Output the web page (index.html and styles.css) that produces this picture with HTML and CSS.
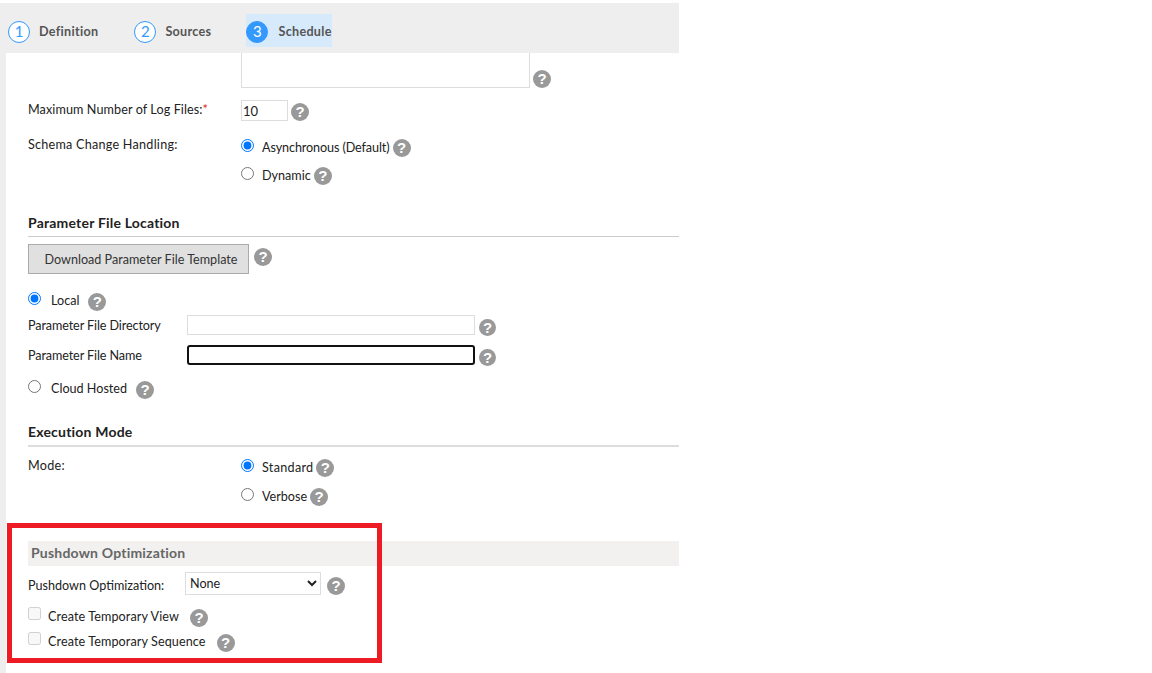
FILE: index.html
```html
<!DOCTYPE html>
<html lang="en">
<head>
    <meta charset="UTF-8">
    <title>Schedule</title>
    <link rel="stylesheet" href="styles.css">
</head>
<body>
    <div class="panel">
        <header class="steps">
            <div class="step"><span class="step-num">1</span><span class="step-name">Definition</span></div>
            <div class="step"><span class="step-num">2</span><span class="step-name">Sources</span></div>
            <div class="step active"><span class="step-num">3</span><span class="step-name">Schedule</span></div>
        </header>

        <main class="content">
            <div class="row row-notes">
                <div class="notes"></div>
                <span class="help help-notes">?</span>
            </div>

            <div class="row row-logs">
                <label class="field-label">Maximum Number of Log Files:<span class="req">*</span></label>
                <input class="text-input logs-input" type="text" value="10">
                <span class="help">?</span>
            </div>

            <div class="row row-schema">
                <label class="field-label">Schema Change Handling:</label>
                <input type="radio" name="schema" checked>
                <span class="option option-wide">Asynchronous (Default)</span>
                <span class="help help-tight">?</span>
            </div>
            <div class="row row-dynamic">
                <span class="field-label"></span>
                <input type="radio" name="schema">
                <span class="option option-wide">Dynamic</span>
                <span class="help help-tight">?</span>
            </div>

            <h2 class="section-title first-title">Parameter File Location</h2>
            <div class="row row-download">
                <button class="download-btn" type="button">Download Parameter File Template</button>
                <span class="help help-download">?</span>
            </div>

            <div class="row row-local">
                <input type="radio" name="location" checked>
                <span class="option">Local</span>
                <span class="help help-gap">?</span>
            </div>
            <div class="row row-param">
                <label class="param-label">Parameter File Directory</label>
                <input class="text-input param-input" type="text">
                <span class="help help-small">?</span>
            </div>
            <div class="row row-param row-param-name">
                <label class="param-label">Parameter File Name</label>
                <input class="text-input param-input focused" type="text">
                <span class="help help-small">?</span>
            </div>
            <div class="row row-cloud">
                <input type="radio" name="location">
                <span class="option">Cloud Hosted</span>
                <span class="help help-gap">?</span>
            </div>

            <h2 class="section-title exec-title">Execution Mode</h2>
            <div class="row row-mode">
                <label class="mode-label">Mode:</label>
                <input type="radio" name="mode" checked>
                <span class="option option-wide">Standard</span>
                <span class="help help-tight">?</span>
            </div>
            <div class="row row-verbose">
                <span class="mode-label"></span>
                <input type="radio" name="mode">
                <span class="option option-wide">Verbose</span>
                <span class="help help-tight">?</span>
            </div>

            <h2 class="pushdown-title">Pushdown Optimization</h2>
            <div class="row row-pushdown">
                <label class="pushdown-label">Pushdown Optimization:</label>
                <select class="pushdown-select">
                    <option>None</option>
                </select>
                <span class="help help-select">?</span>
            </div>
            <div class="row row-check">
                <input type="checkbox" disabled>
                <span class="check-text">Create Temporary View</span>
                <span class="help help-check">?</span>
            </div>
            <div class="row row-check row-check-last">
                <input type="checkbox" disabled>
                <span class="check-text">Create Temporary Sequence</span>
                <span class="help help-check">?</span>
            </div>
        </main>
    </div>

    <!-- annotation drawn over the screenshot -->
    <div class="callout"></div>
</body>
</html>
```

FILE: styles.css
```css
html, body {
    height: 100%;
}
body {
    margin: 0;
    background-color: #fff;
    color: #222;
    font-family: Lato, "Open Sans", sans-serif;
    font-size: 12.6px;
    overflow: hidden;
}
.panel {
    width: 679px;
    height: 670px;
    margin-top: 3px;
    background-color: #eee;
}
.steps {
    display: flex;
    align-items: center;
    height: 50px;
    padding-left: 8px;
}
.step {
    display: flex;
    align-items: center;
    height: 33px;
    margin-top: 5px;
    margin-right: 36px;
}
.step:nth-child(2) {
    margin-right: 35px;
}
.step-num {
    width: 22px;
    height: 22px;
    box-sizing: border-box;
    margin-top: 2px;
    border: 1px solid #39f;
    border-radius: 50%;
    background-color: #fff;
    color: #39f;
    font-size: 15px;
    line-height: 19px;
    text-align: center;
}
.step-name {
    margin-top: 2px;
    margin-left: 9px;
    color: #555;
    font-size: 12.6px;
    font-weight: 700;
    letter-spacing: 0.3px;
}
.step.active {
    margin-right: 0;
    background-color: #d6eafb;
}
.step.active .step-num {
    background-color: #39f;
    color: #fff;
}
.step.active .step-name {
    margin-left: 10px;
}
.content {
    height: 620px;
    margin-left: 6px;
    padding-left: 22px;
    background-color: #fff;
}
.row {
    display: flex;
    align-items: center;
}
.field-label {
    width: 213px;
    flex-shrink: 0;
}
.row-logs .field-label {
    margin-bottom: 2px;
    letter-spacing: 0.1px;
}
.row-schema .field-label {
    margin-bottom: 2px;
    letter-spacing: 0.25px;
}
.req {
    color: #e02020;
}
.notes {
    width: 289px;
    height: 35px;
    box-sizing: border-box;
    margin-left: 213px;
    border: 1px solid #ddd;
    border-top: none;
}
.text-input {
    box-sizing: border-box;
    margin: 0;
    padding: 1px;
    border: 1px solid #ddd;
    font-family: inherit;
    font-size: 13px;
    color: #222;
    outline: none;
}
input[type="radio"],
input[type="checkbox"] {
    margin: 0;
    flex-shrink: 0;
}
.help {
    display: inline-block;
    width: 18px;
    height: 18px;
    flex-shrink: 0;
    border-radius: 50%;
    background-color: #999;
    color: #fff;
    font-family: "Liberation Sans", sans-serif;
    font-size: 15px;
    font-weight: 700;
    line-height: 18px;
    text-align: center;
}
.help-notes {
    align-self: flex-end;
}
.row-notes .help {
    margin-left: 3px;
}
.row-logs {
    height: 21px;
    margin-top: 12px;
}
.logs-input {
    width: 47px;
    height: 21px;
}
.row-logs .help {
    margin-left: 3px;
    margin-top: 3px;
}
.row-schema {
    height: 18px;
    margin-top: 15px;
}
.row-schema .option {
    letter-spacing: -0.1px;
}
.row-dynamic {
    height: 18px;
    margin-top: 10px;
}
.option {
    margin-left: 10px;
    margin-top: 5px;
}
.option-wide {
    margin-left: 8px;
}
.help-tight {
    margin-left: 3px;
    margin-top: 6px;
}
.section-title {
    margin: 0;
    height: 24px;
    border-bottom: 1px solid #ccc;
    font-size: 14px;
    font-weight: 700;
    line-height: 22px;
    letter-spacing: 0.2px;
    color: #222;
}
.first-title {
    margin-top: 30px;
}
.row-download {
    height: 30px;
    margin-top: 7px;
}
.download-btn {
    width: 221px;
    height: 30px;
    margin: 0;
    padding: 0 0 0 5px;
    border: 1px solid #aaa;
    background-color: #e0e0e0;
    color: #333;
    font-family: inherit;
    font-size: 12.6px;
}
.help-download {
    margin-left: 5px;
    margin-top: -4px;
}
.row-local {
    height: 18px;
    margin-top: 15px;
}
.help-gap {
    margin-left: 9px;
    margin-top: 8px;
}
.row-param {
    height: 20px;
    margin-top: 8px;
}
.row-param-name {
    margin-top: 10px;
}
.param-label {
    width: 159px;
    flex-shrink: 0;
    letter-spacing: -0.1px;
}
.param-input {
    width: 288px;
    height: 20px;
}
.param-input.focused {
    border: 2px solid #111;
    border-radius: 3px;
}
.help-small {
    width: 17px;
    height: 17px;
    line-height: 17px;
    margin-left: 4px;
    margin-top: 5px;
}
.row-cloud {
    height: 18px;
    margin-top: 12px;
}
.exec-title {
    margin-top: 29px;
    height: 21px;
    border-bottom-width: 2px;
    border-bottom-color: #ddd;
    line-height: 16px;
}
.row-mode {
    height: 18px;
    margin-top: 9px;
}
.row-mode .option {
    letter-spacing: 0.3px;
}
.row-verbose {
    height: 18px;
    margin-top: 11px;
}
.mode-label {
    width: 213px;
    flex-shrink: 0;
    letter-spacing: 0.3px;
}
.pushdown-title {
    margin: 38px 0 0;
    height: 25px;
    padding-left: 3px;
    background-color: #f2f1f0;
    color: #666;
    font-size: 14px;
    font-weight: 700;
    letter-spacing: 0.2px;
    line-height: 24px;
}
.row-pushdown {
    height: 23px;
    margin-top: 6px;
}
.pushdown-label {
    width: 157px;
    flex-shrink: 0;
    margin-top: 3px;
}
.pushdown-select {
    width: 136px;
    height: 23px;
    box-sizing: border-box;
    padding-left: 0;
    border: 1px solid #ddd;
    background-color: #fff;
    color: #222;
    font-family: inherit;
    font-size: 12.6px;
}
.help-select {
    margin-left: 6px;
    margin-top: 5px;
}
.row-check {
    height: 18px;
    margin-top: 9px;
}
.row-check-last {
    margin-top: 7px;
}
.check-text {
    margin-left: 7px;
    margin-top: 6px;
    letter-spacing: 0.1px;
}
.help-check {
    margin-left: 11px;
    margin-top: 9px;
}
.callout {
    position: absolute;
    left: 7px;
    top: 523px;
    width: 375px;
    height: 140px;
    box-sizing: border-box;
    border: 5px solid #ed1c24;
}
```
